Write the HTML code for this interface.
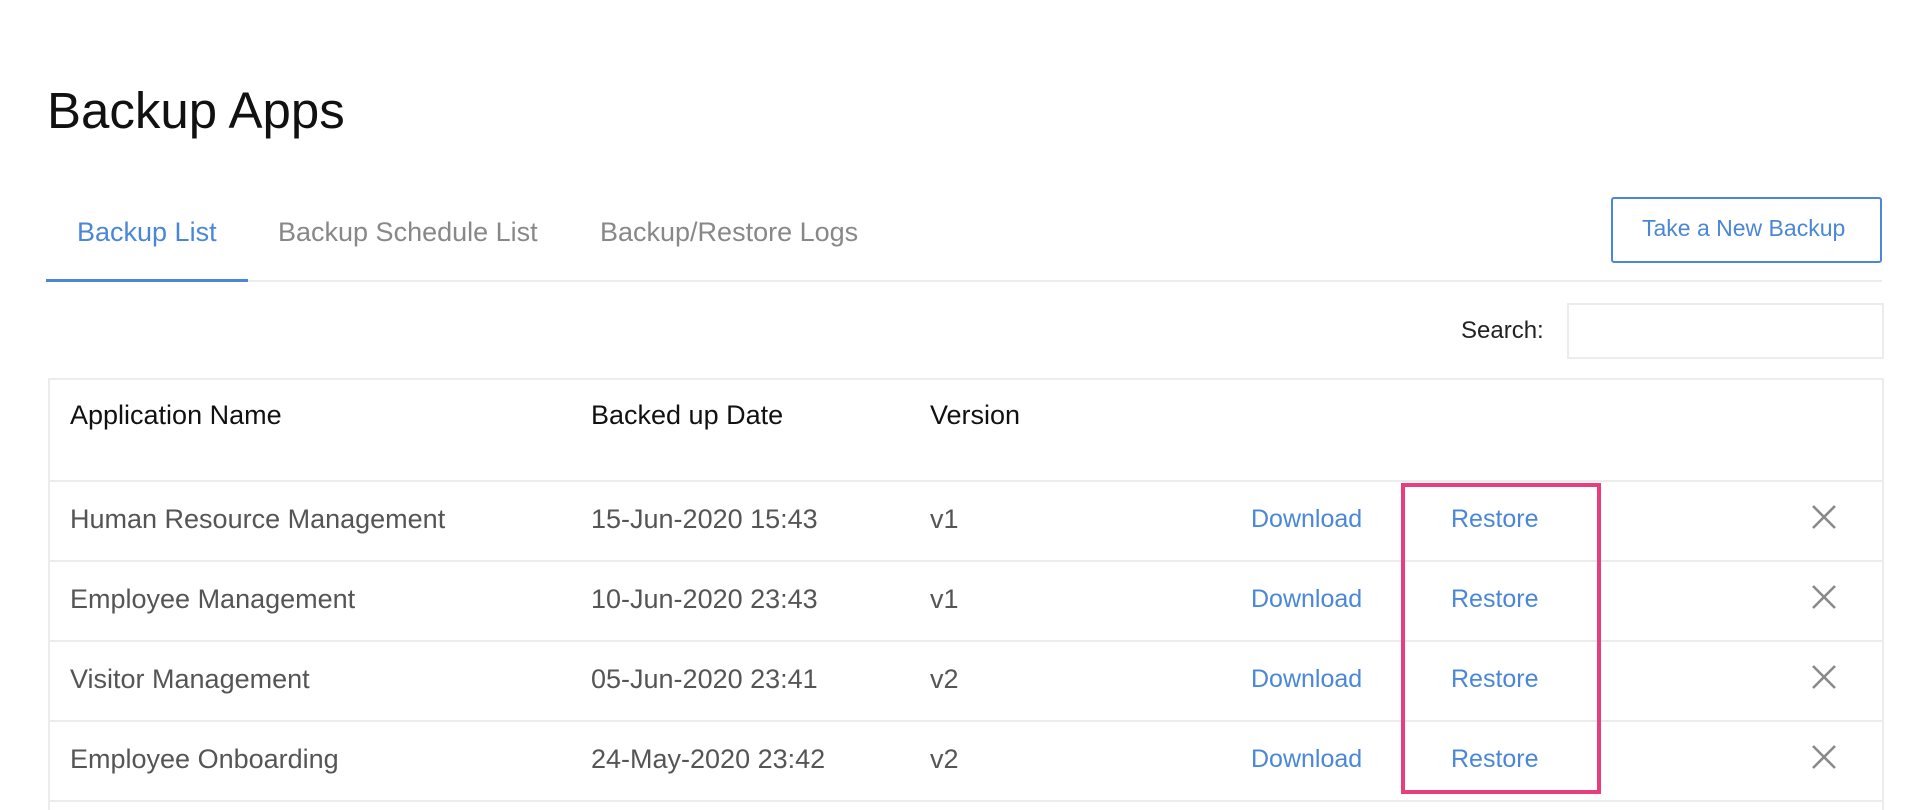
<!DOCTYPE html>
<html><head><meta charset="utf-8"><style>
body{margin:0;width:1906px;height:806px;background:#fff;position:relative;overflow:hidden;font-family:"Liberation Sans",sans-serif;}
.a{position:absolute;white-space:nowrap;line-height:1;}
.h{position:absolute;height:2px;background:#ececec;}
.blue{color:#4a87d9}
.cell{color:#555;font-size:27px}
.hd{color:#111;font-size:27px}
.lk{color:#4a87d9;font-size:25px}
</style></head><body>
<div class="a" style="left:47px;top:85px;font-size:51px;color:#111;">Backup Apps</div>

<div class="a blue" style="left:77px;top:219px;font-size:27px;">Backup List</div>
<div class="a" style="left:278px;top:219px;font-size:27px;color:#888;">Backup Schedule List</div>
<div class="a" style="left:600px;top:219px;font-size:27px;color:#888;">Backup/Restore Logs</div>
<div class="h" style="left:46px;top:280px;width:1836px;"></div>
<div style="position:absolute;left:46px;top:279px;width:202px;height:3px;background:#4a87d9;"></div>

<div style="position:absolute;left:1611px;top:197px;width:267px;height:62px;border:2px solid #4a87d9;border-radius:3px;"></div>
<div class="a blue" style="left:1642px;top:217px;font-size:23px;">Take a New Backup</div>

<div class="a" style="left:1461px;top:319px;font-size:24px;color:#222;">Search:</div>
<div style="position:absolute;left:1567px;top:303px;width:313px;height:52px;border:2px solid #ececec;"></div>

<div style="position:absolute;left:48px;top:378px;width:1832px;height:430px;border:2px solid #ececec;border-bottom:none;"></div>
<div class="a hd" style="left:70px;top:402px;">Application Name</div>
<div class="a hd" style="left:591px;top:402px;">Backed up Date</div>
<div class="a hd" style="left:930px;top:402px;">Version</div>

<div class="h" style="left:48px;top:480px;width:1834px;"></div>
<div class="h" style="left:48px;top:560px;width:1834px;"></div>
<div class="h" style="left:48px;top:640px;width:1834px;"></div>
<div class="h" style="left:48px;top:720px;width:1834px;"></div>
<div class="h" style="left:48px;top:800px;width:1834px;"></div>

<div class="a cell" style="left:70px;top:506px;">Human Resource Management</div>
<div class="a cell" style="left:591px;top:506px;">15-Jun-2020 15:43</div>
<div class="a cell" style="left:930px;top:506px;">v1</div>
<div class="a lk" style="left:1251px;top:507px;">Download</div>
<div class="a lk" style="left:1451px;top:507px;">Restore</div>

<div class="a cell" style="left:70px;top:586px;">Employee Management</div>
<div class="a cell" style="left:591px;top:586px;">10-Jun-2020 23:43</div>
<div class="a cell" style="left:930px;top:586px;">v1</div>
<div class="a lk" style="left:1251px;top:587px;">Download</div>
<div class="a lk" style="left:1451px;top:587px;">Restore</div>

<div class="a cell" style="left:70px;top:666px;">Visitor Management</div>
<div class="a cell" style="left:591px;top:666px;">05-Jun-2020 23:41</div>
<div class="a cell" style="left:930px;top:666px;">v2</div>
<div class="a lk" style="left:1251px;top:667px;">Download</div>
<div class="a lk" style="left:1451px;top:667px;">Restore</div>

<div class="a cell" style="left:70px;top:746px;">Employee Onboarding</div>
<div class="a cell" style="left:591px;top:746px;">24-May-2020 23:42</div>
<div class="a cell" style="left:930px;top:746px;">v2</div>
<div class="a lk" style="left:1251px;top:747px;">Download</div>
<div class="a lk" style="left:1451px;top:747px;">Restore</div>

<svg style="position:absolute;left:0;top:0" width="1906" height="806">
<g stroke="#8a8a8a" stroke-width="2.6" fill="none">
<path d="M1813 506L1835 528M1835 506L1813 528"/>
<path d="M1813 586L1835 608M1835 586L1813 608"/>
<path d="M1813 666L1835 688M1835 666L1813 688"/>
<path d="M1813 746L1835 768M1835 746L1813 768"/>
</g>
<rect x="1403" y="485" width="196" height="307" fill="none" stroke="#e83e7f" stroke-width="4"/>
</svg>
</body></html>
